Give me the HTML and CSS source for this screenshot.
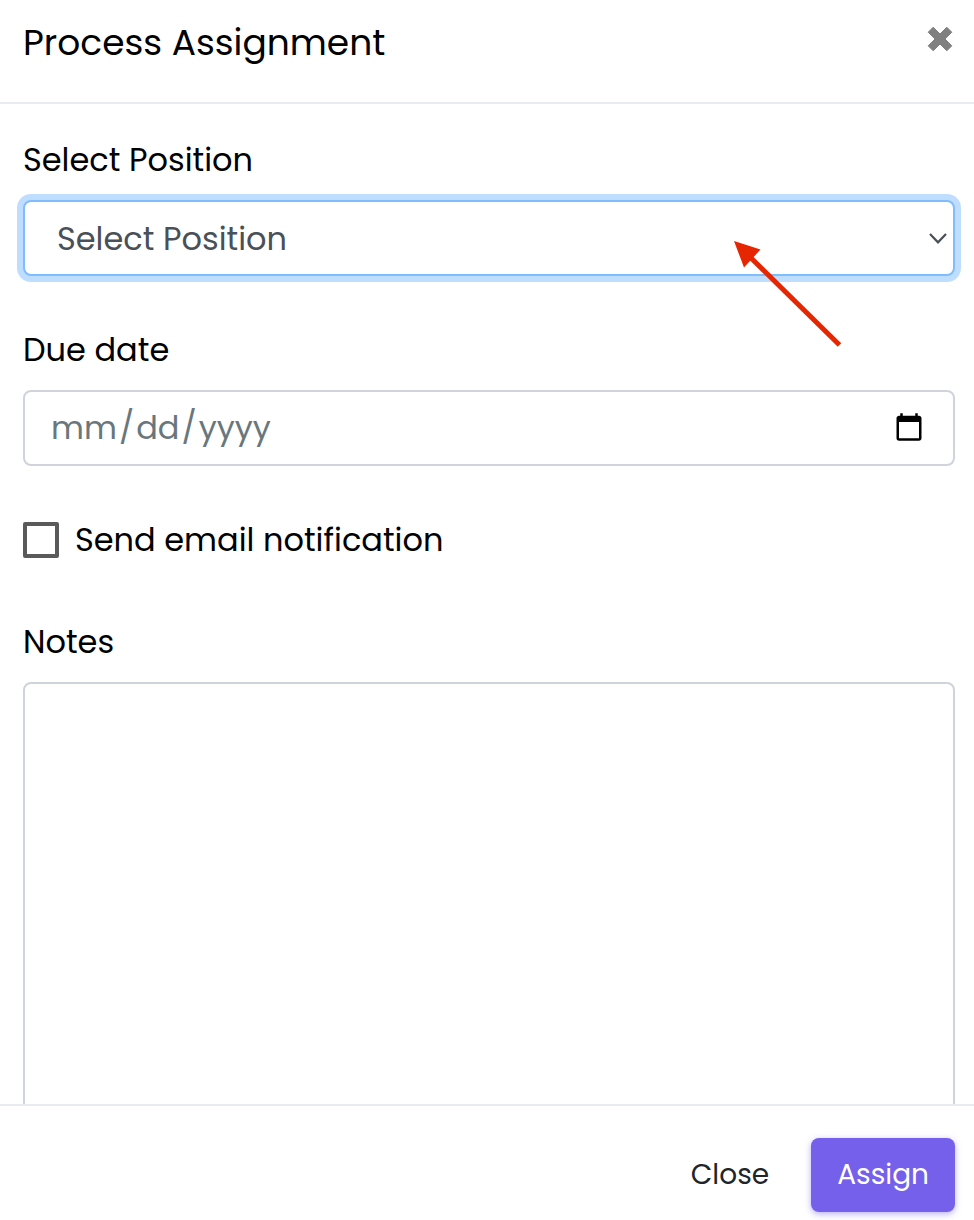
FILE: index.html
```html
<!DOCTYPE html>
<html lang="en">
<head>
<meta charset="utf-8">
<meta name="viewport" content="width=device-width, initial-scale=1">
<title>Process Assignment</title>
<link rel="stylesheet" href="styles.css">
</head>
<body>
<form class="dialog">
  <header class="dialog-header">
    <h1 class="dialog-title">Process Assignment</h1>
    <button class="dismiss" type="button" aria-label="Dismiss">
      <svg class="dismiss-icon" viewBox="0 0 26 26" aria-hidden="true"><path d="M6.2 1.2 13 8l6.8-6.8 5 5L18 13l6.8 6.8-5 5L13 18l-6.8 6.8-5-5L8 13 1.200 6.200Z" fill="#808080" stroke="#808080" stroke-width="1" stroke-linejoin="round"/></svg>
    </button>
  </header>
  <main class="dialog-body">
    <div class="field">
      <label class="label" for="position">Select Position</label>
      <div class="select-wrap">
        <select class="control select" id="position"><option>Select Position</option></select>
        <svg class="chevron" viewBox="0 0 18 11" aria-hidden="true"><path d="M1 1 9 9.300 17 1" fill="none" stroke="#495057" stroke-width="2.200"/></svg>
        <svg class="pointer" viewBox="0 0 108 106" aria-hidden="true"><path d="M16 16 105.500 104" stroke="#e62600" stroke-width="5"/><path d="M0 0 26.500 8.500 10 26.500Z" fill="#e62600"/></svg>
      </div>
    </div>
    <div class="field">
      <label class="label" for="due">Due date</label>
      <input class="control date" id="due" type="date">
    </div>
    <div class="check-row">
      <input class="check" id="notify" type="checkbox">
      <label class="label" for="notify">Send email notification</label>
    </div>
    <div class="field">
      <label class="label" for="notes">Notes</label>
      <textarea class="control notes" id="notes" rows="12"></textarea>
    </div>
  </main>
  <footer class="dialog-footer">
    <button class="button" type="button">Close</button>
    <button class="button primary" type="submit">Assign</button>
  </footer>
</form>
</body>
</html>
```
FILE: styles.css
```css
* { box-sizing: border-box; }

body {
  margin: 0;
  background: #fff;
  color: #000;
  font-family: Poppins, Inter, sans-serif;
  font-size: 32px;
  line-height: 48px;
}

.dialog {
  display: flex;
  flex-direction: column;
  height: 100vh;
}

.dialog-header {
  display: flex;
  flex: none;
  align-items: flex-start;
  justify-content: space-between;
  padding: 16px 19px 32px 23px;
  border-bottom: 2px solid #e9ecef;
}

.dialog-title {
  margin: 0;
  font-size: 36px;
  font-weight: 400;
  line-height: 54px;
}

.dismiss {
  display: flex;
  padding: 10px 2px;
  border: 0;
  background: none;
}

.dismiss-icon {
  width: 26px;
  height: 26px;
}

.dialog-body {
  display: flex;
  flex: 1;
  flex-direction: column;
  gap: 50px;
  min-height: 0;
  padding: 32px 19px 0 23px;
  overflow: hidden;
}

.field {
  display: flex;
  flex: none;
  flex-direction: column;
  gap: 16px;
}

.control {
  width: 100%;
  height: 76px;
  border: 2px solid #ced4da;
  border-radius: 8px;
  outline: 0;
  background: #fff;
  color: #495057;
  font: inherit;
}

.select-wrap { position: relative; }

.select {
  display: block;
  padding: 2px 48px 0 32px;
  border-color: #80bdff;
  box-shadow: 0 0 0 6px #bfdeff;
  appearance: none;
}

.chevron {
  position: absolute;
  top: 33px;
  right: 8px;
  width: 18px;
  height: 11px;
  pointer-events: none;
}

.pointer {
  position: absolute;
  top: 41px;
  right: 113px;
  width: 108px;
  height: 106px;
  pointer-events: none;
}

.date {
  padding: 0 28px 0 24px;
  color: #69777d;
}

.date::-webkit-datetime-edit-month-field,
.date::-webkit-datetime-edit-day-field,
.date::-webkit-datetime-edit-year-field {
  padding: 0 2px;
}

.date::-webkit-calendar-picker-indicator {
  width: 32px;
  height: 32px;
  padding: 0;
}

.check-row {
  display: flex;
  flex: none;
  align-items: center;
  gap: 16px;
  padding-bottom: 4px;
}

.check {
  width: 36px;
  height: 36px;
  margin: 0;
  border: 4px solid #5a5a5a;
  border-radius: 2px;
  background: #fff;
  appearance: none;
}

.check:checked { background: #7460ea; }

.notes {
  height: 480px;
  padding: 12px 24px;
  resize: none;
}

.dialog-footer {
  display: flex;
  flex: none;
  justify-content: flex-end;
  gap: 16px;
  padding: 32px 19px 8px;
  border-top: 2px solid #e9ecef;
}

.button {
  height: 74px;
  padding: 0 26px;
  border: 0;
  border-radius: 8px;
  background: none;
  color: #212529;
  font: inherit;
  font-size: 28px;
}

.primary {
  background: #7460ea;
  box-shadow: 0 2px 6px #7460ea80;
  color: #fff;
}
```
